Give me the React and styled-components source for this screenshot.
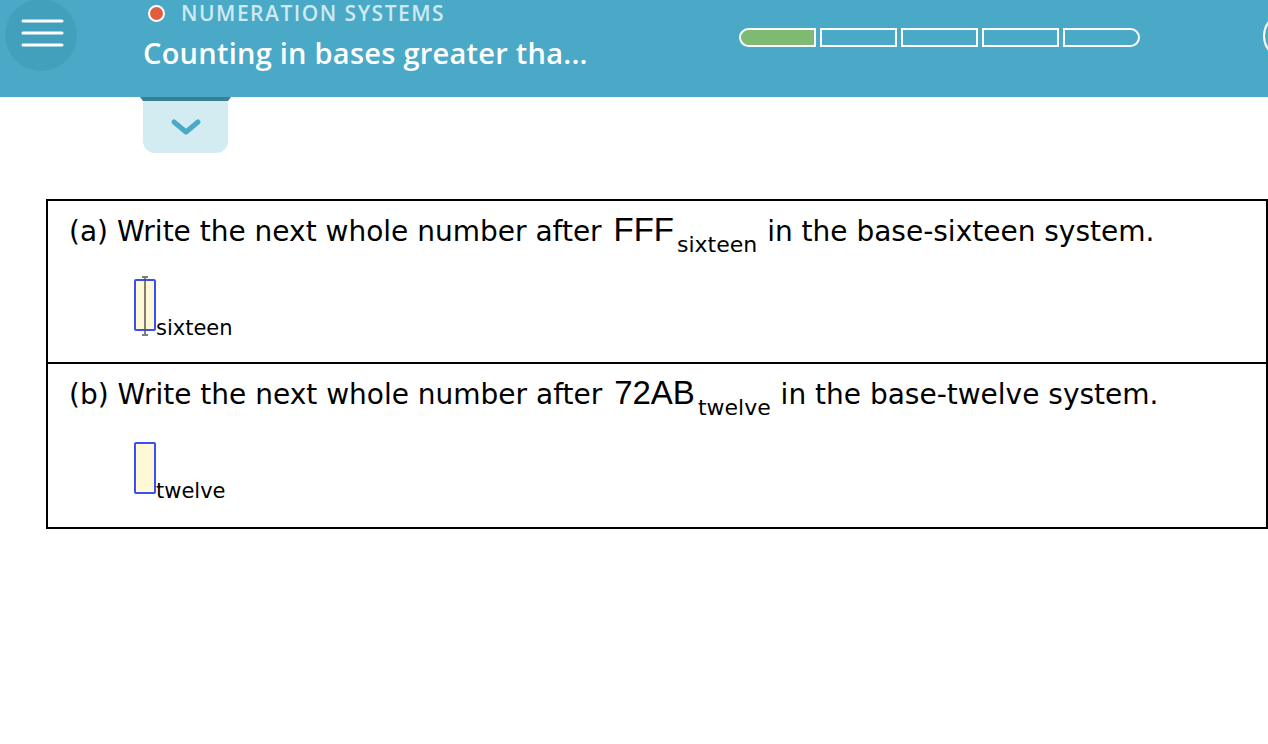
import styled, { createGlobalStyle } from "styled-components";

const GlobalStyle = createGlobalStyle`
  body {
    margin: 0;
    background: #fff;
    font-family: "DejaVu Sans", Verdana, sans-serif;
    overflow: hidden;
  }
`;

function App() {
  return (
    <>
      <GlobalStyle />
      <Header>
        <MenuButton aria-label="menu">
          <svg width="72" height="72" viewBox="0 0 72 72">
            <g stroke="#fff" strokeWidth="3" strokeLinecap="round">
              <line x1="18" y1="22" x2="57" y2="22" />
              <line x1="18" y1="34" x2="57" y2="34" />
              <line x1="18" y1="46" x2="57" y2="46" />
            </g>
          </svg>
        </MenuButton>
        <TitleBlock>
          <Topic>
            <Dot />
            NUMERATION SYSTEMS
          </Topic>
          <Title>Counting in bases greater tha...</Title>
        </TitleBlock>
        <Progress>
          {[true, false, false, false, false].map((done, i) => (
            <Segment key={i} $done={done} $first={i === 0} $last={i === 4} />
          ))}
        </Progress>
        <Ring />
      </Header>

      <Tab>
        <svg width="32" height="20" viewBox="0 0 32 20">
          <polyline
            points="4,4 16,14 28,4"
            fill="none"
            stroke="#4aa9c6"
            strokeWidth="5"
            strokeLinecap="round"
            strokeLinejoin="round"
          />
        </svg>
      </Tab>

      <QuestionBox>
        <Row>
          <Prompt>
            (a) Write the next whole number after <Big>FFF</Big>
            <Sub>sixteen</Sub> in the base-sixteen system.
          </Prompt>
          <Answer>
            <InputBox>
              <Caret viewBox="0 0 10 60" width="10" height="60">
                <g stroke="#555" strokeWidth="1.5">
                  <line x1="5" y1="2" x2="5" y2="58" />
                  <line x1="2" y1="1" x2="8" y2="1" />
                  <line x1="2" y1="59" x2="8" y2="59" />
                </g>
              </Caret>
            </InputBox>
            <Base>sixteen</Base>
          </Answer>
        </Row>
        <Row $last>
          <Prompt>
            (b) Write the next whole number after <Big>72AB</Big>
            <Sub>twelve</Sub> in the base-twelve system.
          </Prompt>
          <Answer>
            <InputBox />
            <Base>twelve</Base>
          </Answer>
        </Row>
      </QuestionBox>
    </>
  );
}

export default App;

const Header = styled.header`
  display: flex;
  align-items: flex-start;
  height: 97px;
  background: #4aa9c6;
  overflow: hidden;
`;

const MenuButton = styled.div`
  flex-shrink: 0;
  width: 72px;
  height: 72px;
  margin: -1px 0 0 5px;
  border-radius: 50%;
  background: #43a0bd;
  svg {
    display: block;
  }
`;

const TitleBlock = styled.div`
  flex-shrink: 0;
  width: 596px;
  margin-left: 66px;
  font-family: "Open Sans", "Noto Sans", sans-serif;
`;

const Topic = styled.div`
  display: flex;
  align-items: center;
  gap: 16px;
  height: 26px;
  font-size: 21px;
  font-weight: 600;
  color: #cdeaf3;
  letter-spacing: 1.5px;
`;

const Dot = styled.span`
  width: 17px;
  height: 17px;
  margin-left: 5px;
  border-radius: 50%;
  background: #e25d3b;
  border: 2px solid #fff;
  box-sizing: border-box;
`;

const Title = styled.div`
  margin-top: 7px;
  font-size: 29px;
  font-weight: 600;
  color: #fff;
  letter-spacing: 0.25px;
`;

const Progress = styled.div`
  display: flex;
  gap: 4px;
  margin-top: 28px;
  flex-shrink: 0;
`;

const Segment = styled.div`
  width: 77px;
  height: 19px;
  box-sizing: border-box;
  border: 2px solid #fff;
  background: ${(p) => (p.$done ? "#7dbb73" : "transparent")};
  border-radius: ${(p) =>
    p.$first ? "10px 0 0 10px" : p.$last ? "0 10px 10px 0" : "0"};
`;

const Ring = styled.div`
  flex-shrink: 0;
  width: 44px;
  height: 44px;
  margin: 12px 0 0 123px;
  border: 2px solid #fff;
  border-radius: 50%;
`;

const Tab = styled.div`
  position: relative;
  display: flex;
  align-items: center;
  justify-content: center;
  width: 85px;
  height: 56px;
  margin-left: 143px;
  padding-top: 4px;
  box-sizing: border-box;
  background: #d3ecf2;
  border-radius: 0 0 12px 12px;
  &::before {
    content: "";
    position: absolute;
    top: 0;
    left: -3px;
    right: -3px;
    height: 4px;
    background: #3b7f94;
    clip-path: polygon(0 0, 100% 0, calc(100% - 3px) 100%, 3px 100%);
  }
  svg {
    margin-top: 2px;
  }
`;

const QuestionBox = styled.div`
  width: 1222px;
  margin: 46px 0 0 46px;
  box-sizing: border-box;
  border: 2px solid #000;
`;

const Row = styled.div`
  height: 163px;
  box-sizing: border-box;
  padding: 11px 0 0 21px;
  border-bottom: ${(p) => (p.$last ? "none" : "2px solid #000")};
`;

const Prompt = styled.div`
  font-size: 28px;
  color: #000;
  line-height: 36px;
  white-space: nowrap;
`;

const Big = styled.span`
  font-family: "Liberation Sans", Arial, sans-serif;
  font-size: 33px;
  margin-left: 3px;
`;

const Sub = styled.span`
  position: relative;
  top: 11px;
  margin: 0 1px 0 3px;
  font-size: 22px;
`;

const Answer = styled.div`
  display: flex;
  align-items: flex-end;
  margin: 27px 0 0 65px;
`;

const InputBox = styled.div`
  position: relative;
  width: 22px;
  height: 52px;
  box-sizing: border-box;
  border: 2px solid #3a4ff2;
  border-radius: 2px;
  background: #fff8d4;
`;

const Caret = styled.svg`
  position: absolute;
  left: 4px;
  top: -5px;
`;

const Base = styled.span`
  font-size: 21px;
  line-height: 21px;
  margin-bottom: -8px;
  color: #000;
`;
